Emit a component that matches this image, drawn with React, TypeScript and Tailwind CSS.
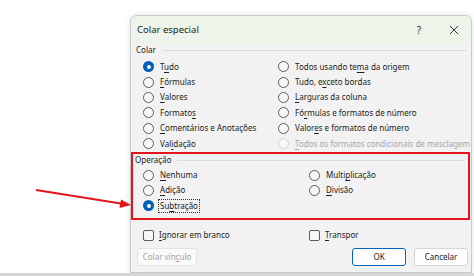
import React from "react";

const font = { fontFamily: '"Noto Sans", "Open Sans", sans-serif' };

function U({ text, at }: { text: string; at: number }) {
  return (
    <>
      {text.slice(0, at)}
      <span className="underline underline-offset-[1.5px]">{text[at]}</span>
      {text.slice(at + 1)}
    </>
  );
}

function Radio({ checked, disabled }: { checked?: boolean; disabled?: boolean }) {
  if (checked)
    return (
      <span className="flex h-[11px] w-[11px] shrink-0 items-center justify-center rounded-full bg-[#005fb8]">
        <span className="h-[4px] w-[4px] rounded-full bg-white" />
      </span>
    );
  return (
    <span
      className={
        "h-[11px] w-[11px] shrink-0 rounded-full border bg-[#f7f7f7] " +
        (disabled ? "border-[#d4d4d4]" : "border-[#5c5c5c]")
      }
    />
  );
}

function Opt({
  text,
  at,
  checked,
  disabled,
  focus,
}: {
  text: string;
  at: number;
  checked?: boolean;
  disabled?: boolean;
  focus?: boolean;
}) {
  return (
    <div className="flex h-[15.4px] items-center gap-[4px] whitespace-nowrap">
      <Radio checked={checked} disabled={disabled} />
      <span
        className={
          (disabled ? "text-[#a6a6a6] " : "text-[#1b1b1b] ") +
          (focus ? "border border-dotted border-[#333] px-[1px] leading-[12px]" : "px-[2px]")
        }
      >
        <U text={text} at={at} />
      </span>
    </div>
  );
}

function Check({ text, at }: { text: string; at: number }) {
  return (
    <div className="flex items-center gap-[5px] whitespace-nowrap">
      <span className="h-[11px] w-[11px] rounded-[2px] border border-[#5c5c5c] bg-[#f7f7f7]" />
      <span className="text-[#1b1b1b]">
        <U text={text} at={at} />
      </span>
    </div>
  );
}

export default function App() {
  return (
    <div className="relative h-[276px] w-[474px] overflow-hidden bg-white text-[8px]" style={font}>
      <div className="ml-[130px] mt-[15px] flex h-[258px] w-[342px] flex-col overflow-hidden rounded-t-[7px] border border-[#c9c9c9] bg-[#f2f2f2] shadow-[0_0_6px_rgba(0,0,0,0.12)]">
        {/* title bar */}
        <div className="flex h-[28px] items-center bg-[#edf5eb] pl-[6px] pr-[12px]">
          <span className="text-[9.5px] text-[#1b1b1b]">Colar especial</span>
          <span className="ml-auto text-[10px] text-[#333]">?</span>
          <svg className="ml-[28px]" width="10" height="10" viewBox="0 0 10 10">
            <path d="M1 1L9 9M9 1L1 9" stroke="#333" strokeWidth="1" />
          </svg>
        </div>

        {/* Colar */}
        <div className="flex h-[12px] items-center gap-[6px] pl-[5px] pr-[4px]">
          <span className="text-[#1b1b1b]">Colar</span>
          <div className="h-px flex-1 bg-[#dcdcdc]" />
        </div>
        <div className="mt-[3px] grid grid-cols-[135px_1fr] pl-[12px]">
          <div className="flex flex-col">
            <Opt text="Tudo" at={1} checked />
            <Opt text="Fórmulas" at={0} />
            <Opt text="Valores" at={0} />
            <Opt text="Formatos" at={7} />
            <Opt text="Comentários e Anotações" at={0} />
            <Opt text="Validação" at={3} />
          </div>
          <div className="flex flex-col">
            <Opt text="Todos usando tema da origem" at={15} />
            <Opt text="Tudo, exceto bordas" at={7} />
            <Opt text="Larguras da coluna" at={0} />
            <Opt text="Fórmulas e formatos de número" at={2} />
            <Opt text="Valores e formatos de número" at={5} />
            <Opt text="Todos os formatos condicionais de mesclagem" at={0} disabled />
          </div>
        </div>

        {/* Operação */}
        <div className="mr-[1px] mt-[1px] h-[68px] border-2 border-[#e3141b] pb-[2px]">
          <div className="flex h-[12px] items-center gap-[6px] pl-[2px] pr-[3px]">
            <span className="text-[#1b1b1b]">Operação</span>
            <div className="h-px flex-1 bg-[#dcdcdc]" />
          </div>
          <div className="mt-[1px] grid grid-cols-[166px_1fr] pl-[10px]">
            <div className="flex flex-col">
              <Opt text="Nenhuma" at={0} />
              <Opt text="Adição" at={0} />
              <Opt text="Subtração" at={2} checked focus />
            </div>
            <div className="flex flex-col">
              <Opt text="Multiplicação" at={5} />
              <Opt text="Divisão" at={0} />
            </div>
          </div>
        </div>

        <div className="mt-[9px] grid grid-cols-[166px_1fr] pl-[12px]">
          <Check text="Ignorar em branco" at={0} />
          <Check text="Transpor" at={0} />
        </div>

        <div className="mt-[7px] flex items-center pl-[6px] pr-[3px]">
          <div className="flex h-[18px] w-[60px] items-center justify-center rounded-[3px] border border-[#e3e3e3] bg-[#fafafa] text-[#a3a3a3]">
            Colar vín<span className="underline">c</span>ulo
          </div>
          <div className="ml-auto flex h-[18px] w-[54px] items-center justify-center rounded-[3px] border border-[#0067c0] bg-[#fdfdfd] text-[#1b1b1b]">
            OK
          </div>
          <div className="ml-[8px] flex h-[18px] w-[54px] items-center justify-center rounded-[3px] border border-[#d6d6d6] bg-[#fdfdfd] text-[#1b1b1b]">
            Cancelar
          </div>
        </div>
      </div>
      <div className="h-[4px] bg-[#d6d6d6]" />

      {/* red arrow */}
      <svg className="absolute left-0 top-0" width="474" height="276" viewBox="0 0 474 276">
        <line x1="36" y1="190" x2="124" y2="204" stroke="#e3141b" strokeWidth="2" />
        <polygon points="131,205 121,199.5 119.5,208" fill="#e3141b" />
      </svg>
    </div>
  );
}
